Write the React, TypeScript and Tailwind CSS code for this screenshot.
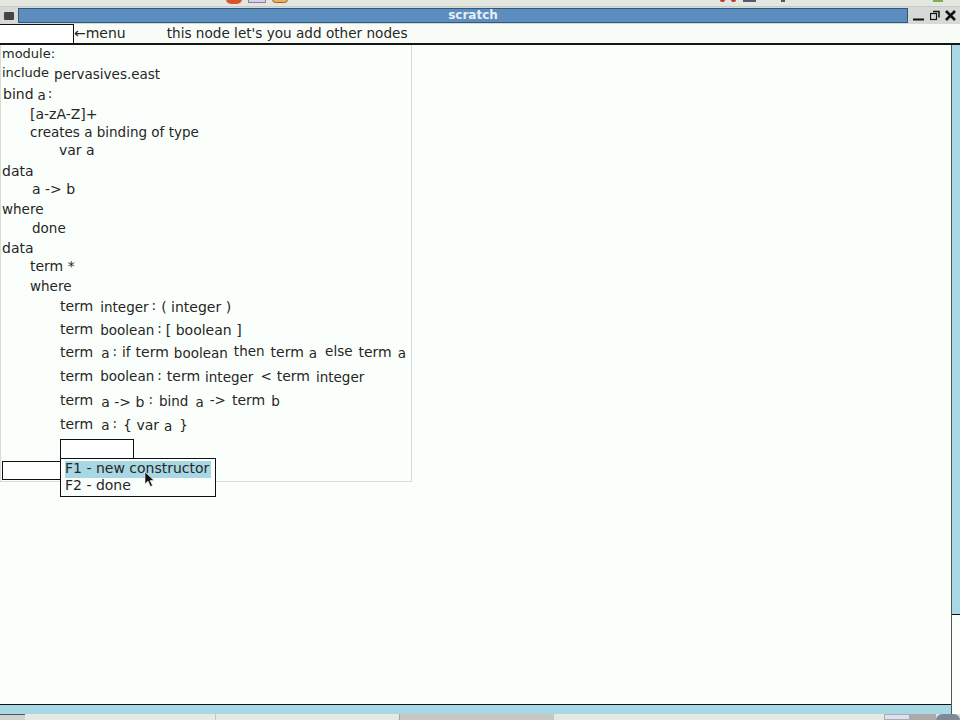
import type { ReactNode } from 'react';

const FONT = "font-['DejaVu_Sans',sans-serif]";

// the editor lays nodes out unevenly, so each token can nudge itself a little
function Tok({ t, y = 0, ml = 0, s = 13.5 }: { t: string; y?: number; ml?: number; s?: number }) {
  return (
    <span
      className="inline-block whitespace-pre"
      style={{ transform: `translateY(${y}px)`, marginLeft: ml, fontSize: s }}
    >
      {t}
    </span>
  );
}

function Row({ mt = 0, pl, children }: { mt?: number; pl: number; children: ReactNode }) {
  return (
    <div className="flex items-center h-[18px] whitespace-pre" style={{ marginTop: mt, paddingLeft: pl }}>
      {children}
    </div>
  );
}

const Term = ({ ml = 0 }: { ml?: number }) => <Tok t="term" s={14} ml={ml} />;

export default function App() {
  return (
    <div className={`${FONT} w-[960px] h-[720px] overflow-hidden flex flex-col bg-[#fbfffb] text-[13.5px] text-[#262626]`}>
      {/* desktop panel */}
      <div className="h-[7px] bg-[#e4e6e0] border-b border-[#c8cac6] shrink-0 flex overflow-hidden">
        <div className="ml-[226px] mt-[-6px] w-[16px] h-[10px] rounded-full bg-[#d8552a]" />
        <div className="ml-[6px] mt-[-3px] w-[18px] h-[6px] bg-[#d9cfe6] border border-[#8a7fa0]" />
        <div className="ml-[6px] mt-[-4px] w-[16px] h-[7px] rounded-full bg-[#e8b060] border border-[#a06030]" />
        <div className="ml-[432px] mt-[-2px] w-[5px] h-[4px] rounded-full bg-[#c0392b]" />
        <div className="ml-[6px] mt-[-2px] w-[5px] h-[4px] rounded-full bg-[#c0392b]" />
        <div className="ml-[7px] mt-[-2px] w-[13px] h-[4px] bg-[#555a70]" />
        <div className="ml-[25px] mt-[-2px] w-[4px] h-[4px] bg-[#555]" />
        <div className="ml-[148px] mt-[-2px] w-[10px] h-[4px] bg-[#7fae5a]" />
      </div>
      {/* window title bar */}
      <div className="h-[17px] shrink-0 bg-[#d6dad6] flex items-center">
        <div className="w-[18px] h-[15px] flex items-center justify-center">
          <div className="w-[10px] h-[8px] bg-[#444] rounded-[1px]" />
        </div>
        <div className="w-[890px] h-[15px] pl-[20px] bg-[#5b8dbf] border border-[#33577a] text-[#e8eef4] text-[12px] font-bold leading-[13px] text-center">
          scratch
        </div>
        <div className="flex-1 flex items-center justify-around px-[2px] text-[#111]">
          <svg width="12" height="12" viewBox="0 0 12 12"><rect x="0" y="8.5" width="11" height="2" fill="#111" /></svg>
          <svg width="10" height="11" viewBox="0 0 10 11" fill="none" stroke="#111"><rect x="0.5" y="3.5" width="6" height="6" strokeWidth="1.2" /><path d="M3 1.5h6v6" strokeWidth="1.5" /></svg>
          <svg width="11" height="11" viewBox="0 0 11 11" stroke="#111" strokeWidth="2.6"><path d="M1 1l9 9M10 1l-9 9" /></svg>
        </div>
      </div>
      {/* menu row */}
      <div className="h-[21px] shrink-0 flex items-center border-b-2 border-[#151515] bg-[#f8fdf8]">
        <div className="w-[74px] h-[19px] bg-white border border-[#111] border-l-0 border-b-0 shrink-0" />
        <span className="text-[14px]">←menu</span>
        <span className="ml-[41px] text-[13.6px]">this node let's you add other nodes</span>
      </div>
      {/* canvas and scrollbar */}
      <div className="flex-1 flex min-h-0">
        <div className="flex-1 flex flex-col">
          <div className="flex-1 relative">
            <div className="w-[412px] h-[437px] border-r border-b border-l border-[#d6dcd6]">
              <Row pl={1}><Tok t="module:" s={13} /></Row>
              <Row mt={1} pl={1}><Tok t="include" s={13} /><Tok t="pervasives.east" ml={5} y={1} /></Row>
              <Row mt={3} pl={2}><Tok t="bind" s={14} /><Tok t="a" ml={4} y={1} /><Tok t=":" ml={2} y={-1} /></Row>
              <Row mt={2} pl={29}><Tok t="[a-zA-Z]+" s={14} /></Row>
              <Row pl={29}><Tok t="creates a binding of type" /></Row>
              <Row pl={58}><Tok t="var a" s={14} /></Row>
              <Row mt={3} pl={1}><Tok t="data" s={14} /></Row>
              <Row pl={31}><Tok t="a -> b" s={14} /></Row>
              <Row mt={2} pl={1}><Tok t="where" /></Row>
              <Row mt={1} pl={31}><Tok t="done" /></Row>
              <Row mt={2} pl={1}><Tok t="data" s={14} /></Row>
              <Row pl={29}><Tok t="term *" s={14} /></Row>
              <Row mt={2} pl={29}><Tok t="where" /></Row>
              <Row mt={2} pl={59}>
                <Term /><Tok t="integer" ml={7} y={1} /><Tok t=":" ml={3} y={-1} /><Tok t="( integer )" s={14} ml={5} y={1} />
              </Row>
              <Row mt={5} pl={59}>
                <Term /><Tok t="boolean" ml={7} y={1} /><Tok t=":" ml={3} y={-1} /><Tok t="[ boolean ]" s={14} ml={4} y={1} />
              </Row>
              <Row mt={5} pl={59}>
                <Term /><Tok t="a" ml={8} y={1} /><Tok t=":" ml={3} y={-1} /><Tok t="if" ml={5} />
                <Term ml={5} /><Tok t="boolean" ml={5} y={1} /><Tok t="then" ml={6} y={-1} />
                <Term ml={6} /><Tok t="a" ml={5} y={1} /><Tok t="else" ml={8} y={-1} />
                <Term ml={6} /><Tok t="a" ml={6} y={1} />
              </Row>
              <Row mt={6} pl={59}>
                <Term /><Tok t="boolean" ml={7} /><Tok t=":" ml={3} y={-1} />
                <Term ml={5} /><Tok t="integer" ml={5} y={1} /><Tok t="<" ml={7} />
                <Term ml={5} /><Tok t="integer" ml={6} y={1} />
              </Row>
              <Row mt={6} pl={59}>
                <Term /><Tok t="a -> b" s={14} ml={8} y={2} /><Tok t=":" ml={4} y={-1} /><Tok t="bind" ml={6} y={1} />
                <Tok t="a" ml={7} y={2} /><Tok t="->" ml={6} />
                <Term ml={6} /><Tok t="b" ml={6} y={1} />
              </Row>
              <Row mt={6} pl={59}>
                <Term /><Tok t="a" ml={8} y={1} /><Tok t=":" ml={3} y={-1} /><Tok t="{ var" s={14} ml={6} y={1} />
                <Tok t="a" ml={5} y={2} /><Tok t="}" ml={7} y={1} />
              </Row>
              <div className="ml-[59px] mt-[6px] w-[74px] h-[20px] bg-white border border-[#111]" />
              <div className="ml-[1px] mt-[2px] w-[60px] h-[19px] bg-white border border-[#111]" />
            </div>
            {/* autocomplete popup */}
            <div className="absolute left-[60px] top-[413px] w-[156px] h-[39px] bg-[#fbfffb] border border-[#111] pl-[4px] pt-[2px] text-[14px] leading-[15px]">
              <div className="w-[146px] h-[17px] bg-[#a8d8e4] whitespace-pre">F1 - new constructor</div>
              <div className="whitespace-pre">F2 - done</div>
            </div>
            {/* mouse pointer */}
            <svg className="absolute left-[144px] top-[426px]" width="11" height="17" viewBox="0 0 11 17">
              <path d="M1 1v12l3-3 2.5 5.5 2-1L6 9.5h4z" fill="#111" stroke="#eee" strokeWidth="0.6" />
            </svg>
          </div>
          {/* horizontal scrollbar */}
          <div className="h-[10px] shrink-0 bg-[#a8d8e4] border-t border-[#111]" />
        </div>
        {/* vertical scrollbar */}
        <div className="w-[9px] shrink-0 border-l border-[#555] flex flex-col">
          <div className="h-[570px] shrink-0 bg-[#a8d8e4] border-b border-[#111]" />
          <div className="flex-1" />
        </div>
      </div>
      {/* desktop taskbar */}
      <div className="h-[6px] shrink-0 bg-[#e4e9e4] flex">
        <div className="w-[25px] bg-[#cfd2cf] border-t border-[#555]" />
        <div className="w-[191px] border-r border-[#c4c8c4]" />
        <div className="w-[184px] border-r border-[#a8a8a2]" />
        <div className="w-[154px] bg-[#c8c8c2]" />
        <div className="w-[330px]" />
        <div className="w-[26px] bg-[#d8e4ea] border border-[#aab]" />
        <div className="w-[26px] bg-[#aaa]" />
        <div className="flex-1 bg-[#7d8a9a] rounded-t-full" />
      </div>
    </div>
  );
}
